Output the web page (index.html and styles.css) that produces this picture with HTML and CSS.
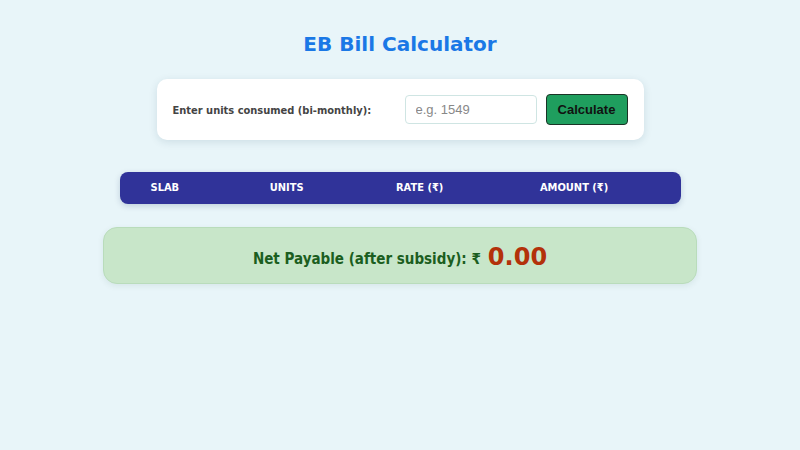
FILE: index.html
```html
<!DOCTYPE html>
<html>
<head>
<meta charset="utf-8">
<title>EB Bill Calculator</title>
<link rel="stylesheet" href="styles.css">
</head>
<body>
  <h1 class="title">EB Bill Calculator</h1>
  <div class="card">
    <label class="label" for="units">Enter units consumed (bi-monthly):</label>
    <input class="input" id="units" type="number" placeholder="e.g. 1549">
    <button class="btn">Calculate</button>
  </div>
  <table class="slabs">
    <thead>
      <tr>
        <th>Slab</th>
        <th>Units</th>
        <th>Rate (₹)</th>
        <th>Amount (₹)</th>
      </tr>
    </thead>
    <tbody></tbody>
  </table>
  <div class="result">
    <span class="result-label">Net Payable (after subsidy): ₹</span>
    <span class="amount">0.00</span>
  </div>
</body>
</html>
```
FILE: styles.css
```css
html, body {
  margin: 0;
  padding: 0;
}
body {
  background: #e8f5f9;
  font-family: "DejaVu Sans", Verdana, sans-serif;
  height: 450px;
}
.title {
  margin: 32px 0 23px;
  font-size: 20px;
  line-height: 24px;
  font-weight: bold;
  text-align: center;
  color: #1a78e6;
}
.card {
  width: 455px;
  margin: 0 auto;
  padding: 15px 16px;
  background: #fff;
  border-radius: 10px;
  box-shadow: 0 2px 8px rgba(0, 60, 80, 0.12);
  display: flex;
  align-items: center;
  gap: 9px;
}
.label {
  flex: 1;
  font-family: "DejaVu Sans Condensed", "DejaVu Sans", sans-serif;
  font-weight: bold;
  font-size: 11px;
  color: #444;
  padding-top: 1px;
}
.input {
  box-sizing: border-box;
  width: 132px;
  height: 29px;
  padding: 0 10px;
  border: 1px solid #cfe5e3;
  border-radius: 4px;
  font-family: "Liberation Sans", Arial, sans-serif;
  font-size: 13px;
  outline: none;
}
.input::placeholder {
  color: #888;
}
.btn {
  box-sizing: border-box;
  width: 82px;
  height: 31px;
  background: #1f9e5e;
  border: 1px solid #1b3326;
  border-radius: 4px;
  font-family: "Liberation Sans", Arial, sans-serif;
  font-weight: bold;
  font-size: 13px;
  color: #111;
  padding: 0;
}
.slabs {
  width: 561px;
  margin: 32px auto 0;
  border-collapse: separate;
  border-spacing: 0;
  background: #303399;
  border-radius: 8px;
  box-shadow: 0 2px 6px rgba(0, 40, 90, 0.18);
}
.slabs th {
  padding: 10px 31px;
  height: 12px;
  line-height: 12px;
  font-family: "DejaVu Sans Condensed", "DejaVu Sans", sans-serif;
  font-size: 11px;
  font-weight: bold;
  color: #fff;
  text-transform: uppercase;
  text-align: left;
}
.result {
  box-sizing: border-box;
  width: 594px;
  height: 57px;
  margin: 23px auto 0;
  background: #c8e6c9;
  border: 1px solid #b9dcbb;
  border-radius: 14px;
  box-shadow: 0 2px 6px rgba(0, 60, 40, 0.08);
  display: flex;
  align-items: center;
  justify-content: center;
  gap: 7px;
  padding-top: 2px;
}
.result-label {
  font-family: "DejaVu Sans Condensed", "DejaVu Sans", sans-serif;
  font-weight: bold;
  font-size: 15px;
  color: #1b5e20;
  padding-top: 4px;
}
.amount {
  font-weight: bold;
  font-size: 24px;
  color: #b3310a;
}
```
